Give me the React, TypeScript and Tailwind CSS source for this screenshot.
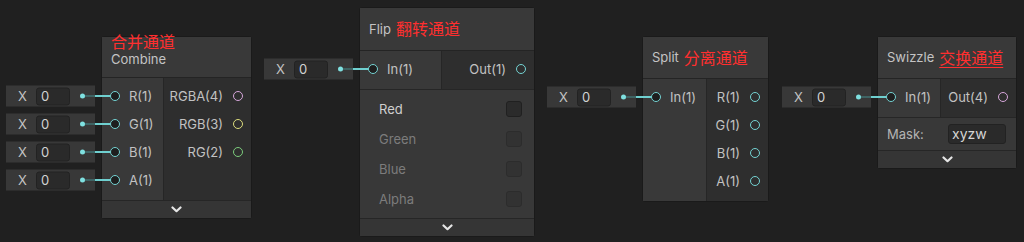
import type { ReactNode } from 'react'

const CYAN = '#74d3d3'

function Chevron() {
  return (
    <svg width="11" height="7" viewBox="0 0 11 7" className="block">
      <polyline points="1.5,1.5 5.5,5.2 9.5,1.5" fill="none" stroke="#e6e6e6" strokeWidth="2.2" strokeLinecap="round" strokeLinejoin="round" />
    </svg>
  )
}

function Editor() {
  return (
    <>
      {/* default value field */}
      <div className="absolute right-[calc(100%+7px)] top-1/2 flex h-[21px] w-[89px] -translate-y-1/2 items-center bg-[#383838] pl-[12px]">
        <span className="text-[#c4c4c4]">X</span>
        <div className="ml-[9px] flex h-[18px] w-[34px] items-center rounded-[3px] border border-[#222222] bg-[#2a2a2a] pl-[4px] text-[#d2d2d2]">0</div>
      </div>
      <span className="absolute left-[-22px] top-1/2 h-[5px] w-[5px] -translate-y-1/2 rounded-full bg-[#7fe0e0]" />
      <span className="absolute left-[-17px] top-1/2 h-[2px] w-[10px] -translate-y-1/2 bg-[#3e6363]" />
      <span className="absolute left-[-7px] top-1/2 h-[2px] w-[16px] -translate-y-1/2 bg-[#6fd0d0]" />
    </>
  )
}

function InPort({ label, editor = true }: { label: string; editor?: boolean }) {
  return (
    <div className="relative flex h-[28px] items-center pl-[27px]">
      {editor && <Editor />}
      <span
        className="absolute left-[8px] top-1/2 h-[10px] w-[10px] -translate-y-1/2 rounded-full border-[1.5px] bg-[#1e1e1e]"
        style={{ borderColor: CYAN }}
      />
      <span className="text-[#c2c2c2]">{label}</span>
    </div>
  )
}

function OutPort({ label, color }: { label: string; color: string }) {
  return (
    <div className="relative flex h-[28px] items-center justify-end pr-[28px]">
      <span className="text-[#c2c2c2]">{label}</span>
      <span
        className="absolute right-[8px] top-1/2 h-[10px] w-[10px] -translate-y-1/2 rounded-full border-[1.5px]"
        style={{ borderColor: color }}
      />
    </div>
  )
}

function Node({
  className,
  title,
  titleClass = 'h-[42px]',
  inWidth,
  inputs,
  outputs,
  children,
  chevron = true,
}: {
  className: string
  title: ReactNode
  titleClass?: string
  inWidth: string
  inputs: ReactNode
  outputs: ReactNode
  children?: ReactNode
  chevron?: boolean
}) {
  return (
    <div className={`absolute flex flex-col rounded-[3px] border border-[#1a1a1a] bg-[#2e2e2e] ${className}`}>
      <div className={`flex items-center border-b border-[#242424] bg-[#393939] px-[9px] ${titleClass}`}>{title}</div>
      <div className="flex">
        <div className={`border-r border-[#262626] bg-[#393939] pb-[6px] pt-[4px] ${inWidth}`}>{inputs}</div>
        <div className="flex-1 bg-[#2e2e2e] pb-[6px] pt-[4px]">{outputs}</div>
      </div>
      {children}
      {chevron && (
        <div className="flex h-[18px] items-center justify-center border-t border-[#262626] bg-[#353535]">
          <Chevron />
        </div>
      )}
    </div>
  )
}

function Check({ label, active }: { label: string; active?: boolean }) {
  return (
    <div className="flex h-[30px] items-center justify-between pl-[19px] pr-[12px]">
      <span className={active ? 'text-[#cfcfcf]' : 'text-[#7c7c7c]'}>{label}</span>
      <span
        className={`h-[16px] w-[16px] rounded-[3px] border ${
          active ? 'border-[#202020] bg-[#2b2b2b]' : 'border-[#2c2c2c] bg-[#323232]'
        }`}
      />
    </div>
  )
}

const red = 'text-[16px] leading-[18px] text-[#ff2f2f]'

export default function App() {
  return (
    <div className="relative h-[242px] w-[1024px] overflow-hidden bg-[#202020] font-['Inter','Noto_Sans_CJK_SC',sans-serif] text-[13px] leading-none">
      {/* Combine */}
      <Node
        className="left-[101px] top-[36px] w-[151px]"
        titleClass="h-[41px] !items-start"
        inWidth="w-[62px]"
        title={
          <div className="flex flex-col">
            <span className={`-mt-[4px] ${red}`}>合并通道</span>
            <span className="mt-[1px] leading-[15px] text-[#c4c4c4]">Combine</span>
          </div>
        }
        inputs={
          <>
            <InPort label="R(1)" />
            <InPort label="G(1)" />
            <InPort label="B(1)" />
            <InPort label="A(1)" />
          </>
        }
        outputs={
          <>
            <OutPort label="RGBA(4)" color="#d6a6da" />
            <OutPort label="RGB(3)" color="#dcdc7c" />
            <OutPort label="RG(2)" color="#7ccc7c" />
          </>
        }
      />

      {/* Flip */}
      <Node
        className="left-[359px] top-[7px] w-[176px]"
        titleClass="h-[43px]"
        inWidth="w-[82px]"
        title={
          <div className="flex items-center gap-[5px]">
            <span className="text-[#c4c4c4]">Flip</span>
            <span className={red}>翻转通道</span>
          </div>
        }
        inputs={<InPort label="In(1)" />}
        outputs={<OutPort label="Out(1)" color={CYAN} />}
      >
        <div className="border-t border-[#262626] bg-[#383838] py-[4px]">
          <Check label="Red" active />
          <Check label="Green" />
          <Check label="Blue" />
          <Check label="Alpha" />
        </div>
      </Node>

      {/* Split */}
      <Node
        className="left-[642px] top-[36px] w-[127px]"
        inWidth="w-[64px]"
        chevron={false}
        title={
          <div className="flex items-center gap-[5px]">
            <span className="text-[#c4c4c4]">Split</span>
            <span className={red}>分离通道</span>
          </div>
        }
        inputs={<InPort label="In(1)" />}
        outputs={
          <>
            <OutPort label="R(1)" color={CYAN} />
            <OutPort label="G(1)" color={CYAN} />
            <OutPort label="B(1)" color={CYAN} />
            <OutPort label="A(1)" color={CYAN} />
          </>
        }
      />

      {/* Swizzle */}
      <Node
        className="left-[877px] top-[36px] w-[140px]"
        inWidth="w-[63px]"
        title={
          <div className="flex items-center gap-[5px]">
            <span className="text-[#c4c4c4]">Swizzle</span>
            <span className={`${red} underline decoration-1 underline-offset-[3px]`}>交换通道</span>
          </div>
        }
        inputs={<InPort label="In(1)" />}
        outputs={<OutPort label="Out(4)" color="#d6a6da" />}
      >
        <div className="flex h-[33px] items-center justify-between border-t border-[#262626] bg-[#383838] pl-[9px] pr-[10px]">
          <span className="text-[#b4b4b4]">Mask:</span>
          <div className="flex h-[20px] w-[58px] items-center rounded-[3px] border border-[#222222] bg-[#2a2a2a] pl-[3px] text-[14px] text-[#d4d4d4]">
            xyzw
          </div>
        </div>
      </Node>
    </div>
  )
}
